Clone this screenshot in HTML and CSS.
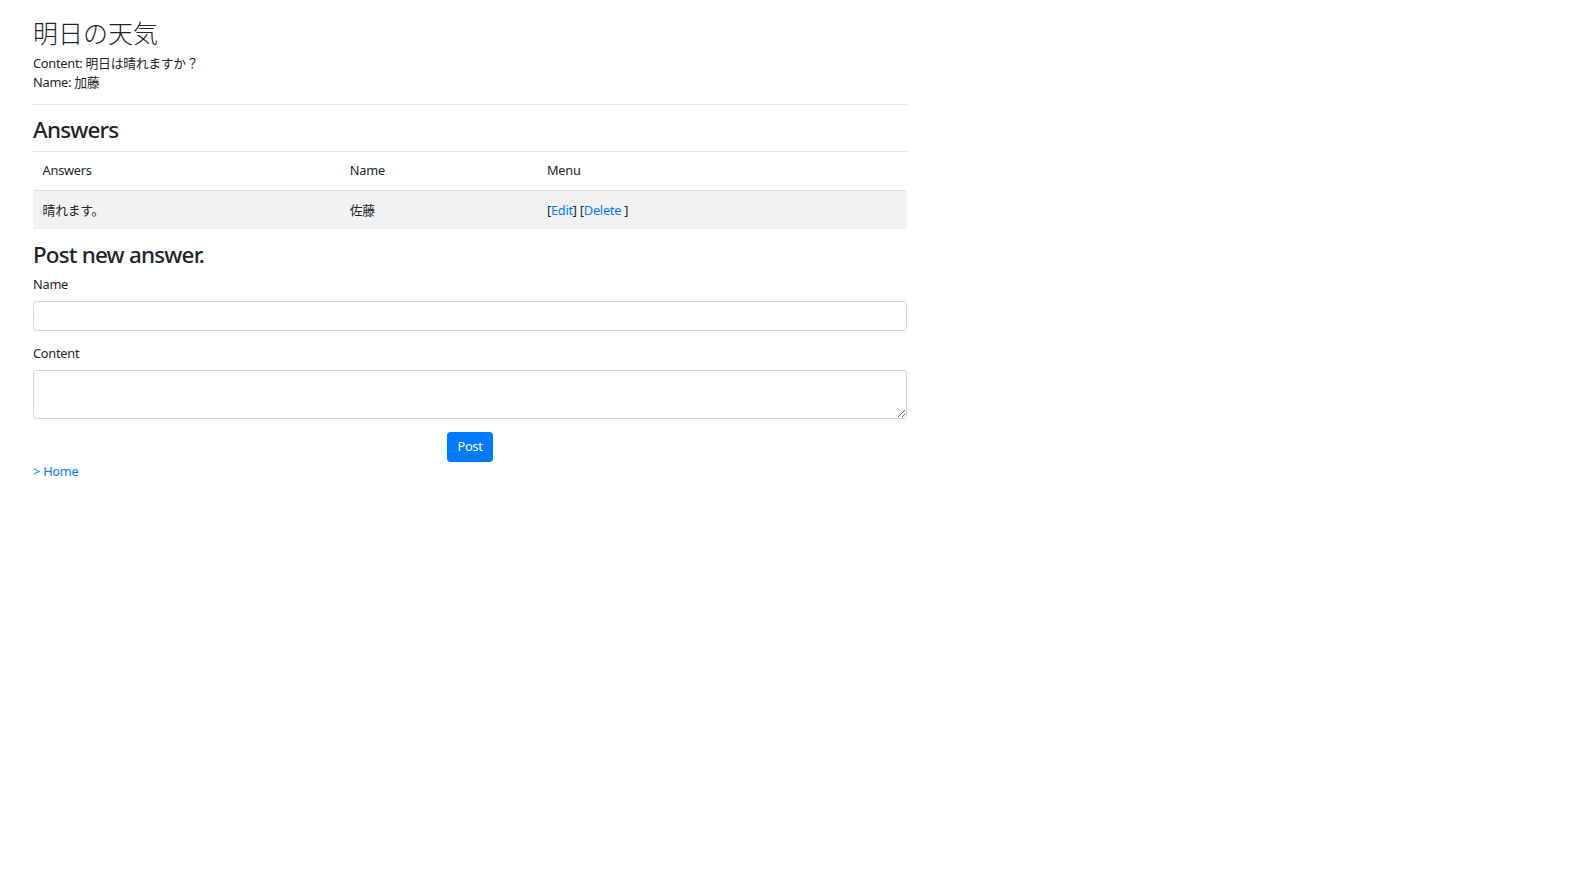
FILE: index.html
```
<!DOCTYPE html>
<html lang="ja">
<head>
<meta charset="utf-8">
<title>明日の天気</title>
<link rel="stylesheet" href="styles.css">
</head>
<body>
<div class="container">
  <h2 class="title">明日の天気</h2>
  <div class="meta">
    <div>Content: 明日は晴れますか？</div>
    <div>Name: 加藤</div>
  </div>
  <hr class="divider">
  <h3 class="section">Answers</h3>
  <table class="table">
    <thead>
      <tr><th class="c1">Answers</th><th class="c2">Name</th><th class="c3">Menu</th></tr>
    </thead>
    <tbody>
      <tr class="striped"><td>晴れます。</td><td>佐藤</td><td>[<a href="#">Edit</a>] [<a href="#">Delete </a>]</td></tr>
    </tbody>
  </table>
  <h3 class="section">Post new answer.</h3>
  <form class="form">
    <div class="group">
      <label class="label">Name</label>
      <input class="input" type="text">
    </div>
    <div class="group">
      <label class="label">Content</label>
      <textarea class="input textarea"></textarea>
    </div>
    <div class="actions"><button class="btn" type="button">Post</button></div>
  </form>
  <a class="home" href="#">&gt; Home</a>
</div>
</body>
</html>
```
FILE: styles.css
```
html, body {
  margin: 0;
  padding: 0;
  background: #fff;
}
body {
  font-family: "Noto Sans", "Noto Sans CJK JP", sans-serif;
  font-size: 12.8px;
  line-height: 1.5;
  color: #212529;
  letter-spacing: -0.02em;
}
.container {
  width: 874px;
  padding: 17px 0 0 33px;
}
.title {
  margin: 0 0 6.4px;
  font-family: "Noto Sans CJK JP", sans-serif;
  font-weight: 300;
  font-size: 25px;
  line-height: 30.7px;
  letter-spacing: 0;
}
.meta {
  line-height: 19.2px;
}
.divider {
  border: 0;
  border-top: 1px solid rgba(0,0,0,0.1);
  margin: 11px 0 12.8px;
}
.section {
  margin: 0 0 6.4px;
  font-weight: 500;
  font-size: 22.4px;
  line-height: 26.9px;
  letter-spacing: -0.035em;
}
.table {
  width: 100%;
  border-collapse: collapse;
  margin-bottom: 12.8px;
}
.table th, .table td {
  text-align: left;
  font-weight: 400;
  padding: 9.6px 9.6px;
  border-top: 1px solid #dee2e6;
  vertical-align: top;
  line-height: 19.2px;
}
.c1 { width: 288px; }
.c2 { width: 178px; }
.striped { background: #f2f2f2; }
a { color: #007bff; text-decoration: none; }
.label {
  display: block;
  margin-bottom: 6.4px;
  line-height: 19.2px;
}
.group { margin-bottom: 12.8px; }
.input {
  display: block;
  box-sizing: border-box;
  width: 100%;
  height: 30.4px;
  border: 1px solid #ced4da;
  border-radius: 3.2px;
  padding: 4.8px 9.6px;
  font: inherit;
  background: #fff;
}
.textarea {
  height: 49px;
  resize: vertical;
}
.actions {
  display: flex;
  justify-content: center;
}
.btn {
  background: #007bff;
  border: 1px solid #007bff;
  color: #fff;
  font: inherit;
  letter-spacing: -0.02em;
  line-height: 19.2px;
  padding: 4.8px 9.6px;
  border-radius: 3.2px;
}
.home {
  display: inline-block;
  line-height: 19.2px;
}
```
